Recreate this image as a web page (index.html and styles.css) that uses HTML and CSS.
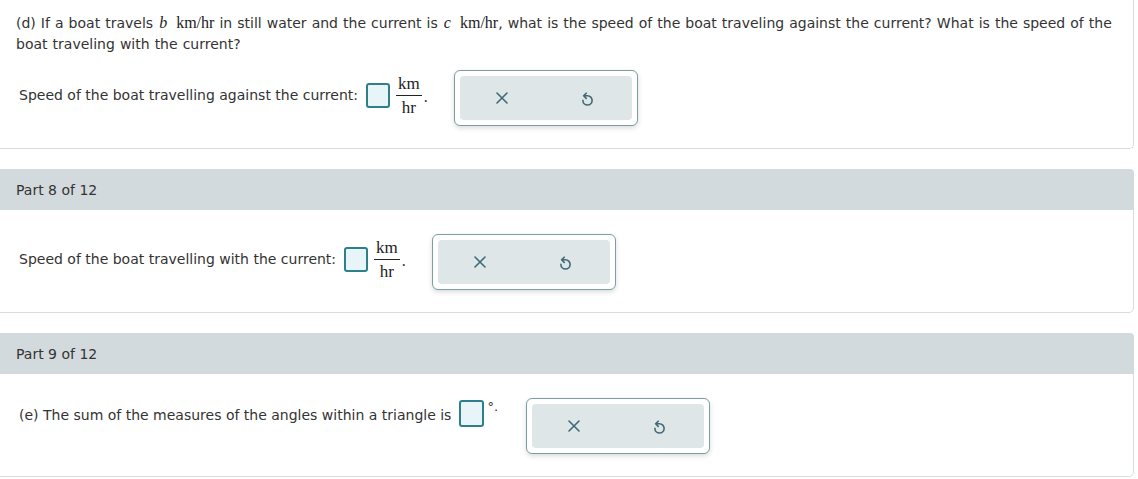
FILE: index.html
```html
<!DOCTYPE html>
<html>
<head>
<meta charset="utf-8">
<link rel="stylesheet" href="styles.css">
</head>
<body>
<div class="card card-first">
  <p class="question">(d) If a boat travels <span class="m"><i class="v">b</i>km/hr</span> in still water and the current is <span class="m"><i class="v">c</i>km/hr</span>, what is the speed of the boat traveling against the current? What is the speed of the boat traveling with the current?</p>
  <div class="row">
    <div class="answer">
      <span class="label">Speed of the boat travelling against the current:</span>
      <span class="input"></span>
      <span class="frac"><span class="num">km</span><span class="den">hr</span></span><span class="dot">.</span>
    </div>
    <div class="tools">
      <div class="tools-inner">
        <svg class="icon-x" width="12" height="12" viewBox="0 0 12 12"><path d="M1 1 L11 11 M11 1 L1 11" /></svg>
        <svg class="icon-undo" width="14" height="16" viewBox="0 0 14 16"><path d="M6.2 2.2 L3.6 4.8 L6.2 7.4 M3.8 4.8 H7.5 A4.6 4.6 0 1 1 2.9 9.4" /></svg>
      </div>
    </div>
  </div>
</div>

<div class="card">
  <div class="header">Part 8 of 12</div>
  <div class="row">
    <div class="answer">
      <span class="label">Speed of the boat travelling with the current:</span>
      <span class="input"></span>
      <span class="frac"><span class="num">km</span><span class="den">hr</span></span><span class="dot">.</span>
    </div>
    <div class="tools">
      <div class="tools-inner">
        <svg class="icon-x" width="12" height="12" viewBox="0 0 12 12"><path d="M1 1 L11 11 M11 1 L1 11" /></svg>
        <svg class="icon-undo" width="14" height="16" viewBox="0 0 14 16"><path d="M6.2 2.2 L3.6 4.8 L6.2 7.4 M3.8 4.8 H7.5 A4.6 4.6 0 1 1 2.9 9.4" /></svg>
      </div>
    </div>
  </div>
</div>

<div class="card">
  <div class="header">Part 9 of 12</div>
  <div class="row row-top">
    <div class="answer answer-simple">
      <span class="label">(e) The sum of the measures of the angles within a triangle is</span>
      <span class="input input-deg"></span><span class="deg">°.</span>
    </div>
    <div class="tools">
      <div class="tools-inner">
        <svg class="icon-x" width="12" height="12" viewBox="0 0 12 12"><path d="M1 1 L11 11 M11 1 L1 11" /></svg>
        <svg class="icon-undo" width="14" height="16" viewBox="0 0 14 16"><path d="M6.2 2.2 L3.6 4.8 L6.2 7.4 M3.8 4.8 H7.5 A4.6 4.6 0 1 1 2.9 9.4" /></svg>
      </div>
    </div>
  </div>
</div>
</body>
</html>
```

FILE: styles.css
```css
html, body {
  margin: 0;
  padding: 0;
  background: #ffffff;
}
body {
  font-family: "DejaVu Sans", Verdana, sans-serif;
  font-size: 14px;
  color: #333333;
  width: 1138px;
  overflow: hidden;
}
.card {
  width: 1135px;
  box-sizing: border-box;
  margin-left: -1px;
  border: 1px solid #d6dcdf;
  border-radius: 0 5px 5px 0;
  background: #fff;
  margin-bottom: 20px;
}
.card-first {
  border-top: none;
  border-radius: 0 0 5px 0;
  padding-top: 13px;
}
.question {
  margin: 0;
  padding: 0 4px 0 16px;
  line-height: 21px;
  word-spacing: 0.6px;
}
.m {
  font-family: "Liberation Serif", "Times New Roman", serif;
  font-size: 16px;
  line-height: 16px;
  color: #222;
  word-spacing: 0;
}
.v {
  margin-right: 9px;
  margin-left: 1px;
}
.header {
  height: 41px;
  background: #d3dadd;
  border-radius: 0 4px 0 0;
  display: flex;
  align-items: center;
  padding-left: 16px;
  margin-top: -1px;
  margin-right: -1px;
}
.row {
  display: flex;
  align-items: center;
  padding: 24px 0 22px 19px;
}
.card-first .row {
  padding-top: 15px;
}
.row-top {
  align-items: flex-start;
}
.answer {
  display: flex;
  align-items: center;
  margin-bottom: 6px;
}
.answer-simple {
  padding-top: 2px;
  margin-bottom: 0;
}
.label {
  margin-right: 8px;
}
.answer-simple .label {
  margin-top: 2px;
}
.input {
  display: inline-block;
  width: 20px;
  height: 21px;
  border: 2px solid #2e7f8c;
  border-radius: 3px;
  background: #e7f4f8;
}
.input-deg {
  width: 21px;
  height: 23px;
}
.deg {
  font-size: 13px;
  align-self: flex-start;
  margin-left: 3px;
  margin-top: -1px;
}
.frac {
  display: inline-flex;
  flex-direction: column;
  align-items: center;
  font-family: "Liberation Serif", "Times New Roman", serif;
  font-size: 17px;
  color: #222;
  margin-left: 6px;
  line-height: 19px;
}
.num {
  padding: 0 2px 2px;
  border-bottom: 1px solid #222;
}
.den {
  padding: 2px 2px 0;
}
.dot {
  font-family: "Liberation Serif", serif;
  font-size: 16px;
  margin-left: 2px;
  margin-top: 4px;
}
.tools {
  margin-left: 26px;
  width: 184px;
  height: 56px;
  box-sizing: border-box;
  border: 1px solid #7d9da5;
  border-radius: 6px;
  background: #fff;
  box-shadow: 0 2px 5px rgba(0, 0, 0, 0.15);
  padding: 5px;
}
.row-top .tools {
  margin-left: 28px;
}
.tools-inner {
  height: 100%;
  background: #dfe6e8;
  border-radius: 4px;
  display: flex;
  align-items: center;
  justify-content: space-around;
  padding: 0 2px 0 0;
}
.icon-x path, .icon-undo path {
  fill: none;
  stroke: #3e6a75;
  stroke-width: 1.6;
  stroke-linecap: round;
  stroke-linejoin: round;
}
.icon-undo {
  margin-top: 1px;
}
```
